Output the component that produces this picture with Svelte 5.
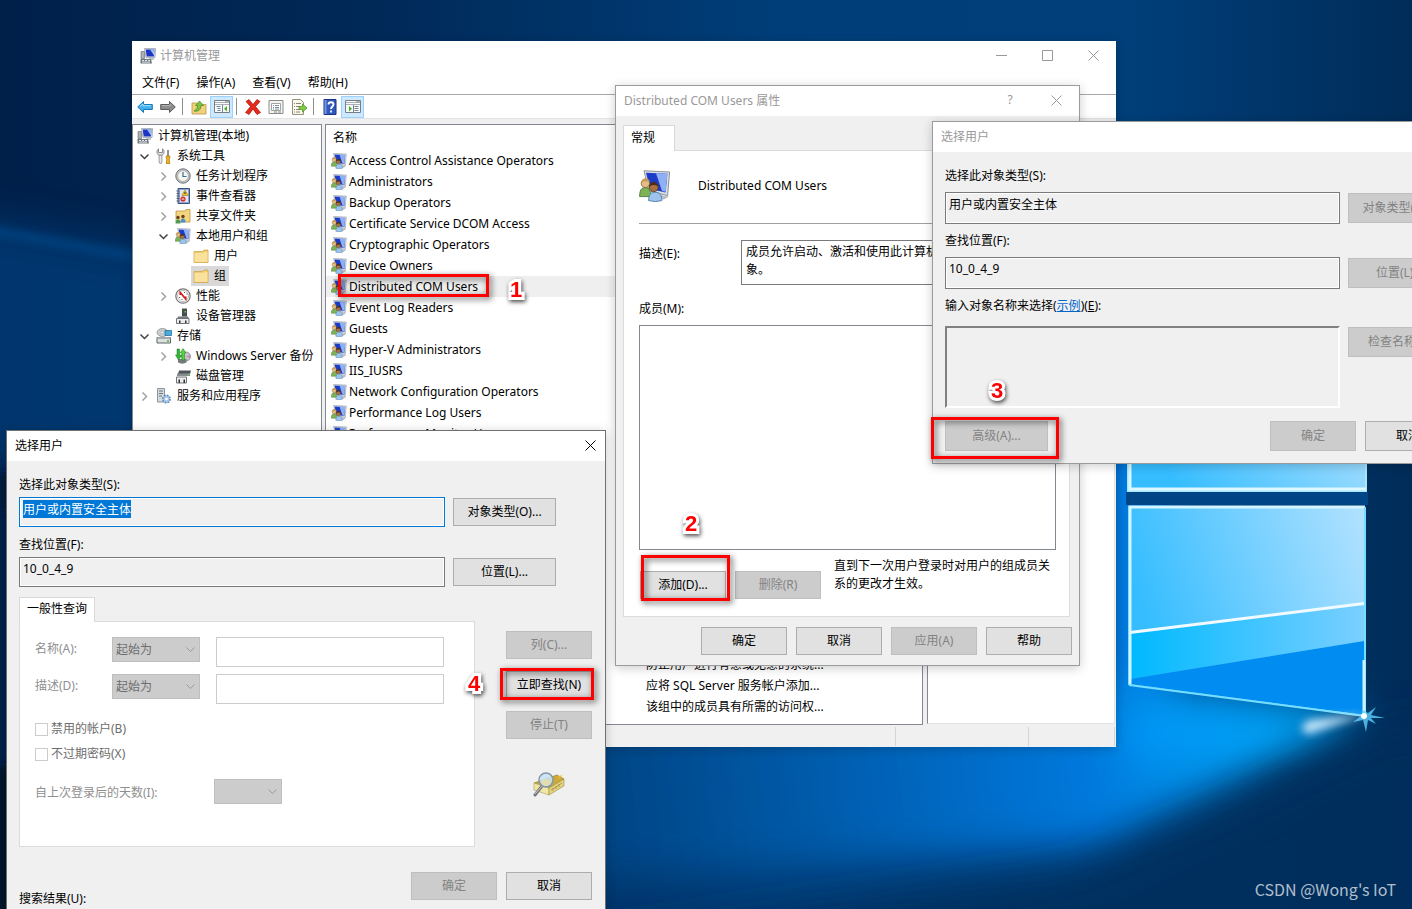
<script lang="ts">
	import { onMount } from 'svelte';

	type TreeNode = { level: number; icon: string; label: string; state?: 'open' | 'closed'; selected?: boolean };
	type Group = { name: string; description?: string; selected?: boolean };

	const menus = ['文件(F)', '操作(A)', '查看(V)', '帮助(H)'];

	const toolbar = [
		{ icon: 'back', label: '后退' },
		{ icon: 'forward', label: '前进' },
		null,
		{ icon: 'up', label: '上移' },
		{ icon: 'treePane', label: '显示控制台树', on: true },
		null,
		{ icon: 'remove', label: '删除' },
		{ icon: 'sheet', label: '属性' },
		{ icon: 'exportList', label: '导出列表' },
		null,
		{ icon: 'help', label: '帮助' },
		{ icon: 'actionPane', label: '显示操作窗格', on: true }
	];

	const tree: TreeNode[] = [
		{ level: 0, icon: 'computer', label: '计算机管理(本地)' },
		{ level: 1, icon: 'tools', label: '系统工具', state: 'open' },
		{ level: 2, icon: 'clock', label: '任务计划程序', state: 'closed' },
		{ level: 2, icon: 'eventLog', label: '事件查看器', state: 'closed' },
		{ level: 2, icon: 'share', label: '共享文件夹', state: 'closed' },
		{ level: 2, icon: 'users', label: '本地用户和组', state: 'open' },
		{ level: 3, icon: 'folder', label: '用户' },
		{ level: 3, icon: 'folder', label: '组', selected: true },
		{ level: 2, icon: 'gauge', label: '性能', state: 'closed' },
		{ level: 2, icon: 'device', label: '设备管理器' },
		{ level: 1, icon: 'storage', label: '存储', state: 'open' },
		{ level: 2, icon: 'backup', label: 'Windows Server 备份', state: 'closed' },
		{ level: 2, icon: 'disk', label: '磁盘管理' },
		{ level: 1, icon: 'services', label: '服务和应用程序', state: 'closed' }
	];

	const blank = (n: number): Group[] => Array.from({ length: n }, () => ({ name: '' }));

	const groups: Group[] = [
		{ name: 'Access Control Assistance Operators' },
		{ name: 'Administrators' },
		{ name: 'Backup Operators' },
		{ name: 'Certificate Service DCOM Access' },
		{ name: 'Cryptographic Operators' },
		{ name: 'Device Owners' },
		{ name: 'Distributed COM Users', selected: true },
		{ name: 'Event Log Readers' },
		{ name: 'Guests' },
		{ name: 'Hyper-V Administrators' },
		{ name: 'IIS_IUSRS' },
		{ name: 'Network Configuration Operators' },
		{ name: 'Performance Log Users' },
		{ name: 'Performance Monitor Users' },
		...blank(10),
		{ name: '', description: '防止用户进行有意或无意的系统...' },
		{ name: '', description: '应将 SQL Server 服务帐户添加...' },
		{ name: '', description: '该组中的成员具有所需的访问权...' }
	];

	let objectType = $state('用户或内置安全主体');
	let location = $state('10_0_4_9');
	let typeField: HTMLInputElement | null = $state(null);

	onMount(() => {
		typeField?.focus();
		typeField?.select();
	});
</script>

{#snippet people()}
	<path d="M2.500.400 15.300 1l-1 11.800L5 10.500z" fill="#d9dde2" stroke="#8b929b" stroke-width=".5" />
	<path d="M3.500 1.400 14.200 1.900l-.900 9.300L5.500 9.500z" fill="#1c3cc8" />
	<path d="M8.500 1.600l5.700.300-.900 9-1.800-.400z" fill="#8fb0f5" />
	<path d="M10.500 12.500l4.500.800-2.500 1.400-2-.200z" fill="#b9bec4" />
	<path d="M.300 13.300c0-3 .800-4.500 2.800-4.500s2.800 1.500 2.800 4.500z" fill="#7db356" stroke="#3f6f2c" stroke-width=".4" />
	<circle cx="3.200" cy="6.700" r="2.100" fill="#e3bd84" stroke="#80602f" stroke-width=".4" />
	<path d="M1.200 6.200c.200-2.800 4-2.600 4.100-.200-1.400-.500-2.700-.500-4.100.200z" fill="#c79a55" />
	<path d="M4.800 15.300c0-2.800 1-4.200 3.300-4.200s3.300 1.400 3.300 4.200q-3.300 1-6.600 0z" fill="#9cc4ec" stroke="#41719f" stroke-width=".4" />
	<circle cx="7.400" cy="8.600" r="2.200" fill="#a9713f" stroke="#533318" stroke-width=".4" />
	<path d="M5.200 8.200c0-3 4.400-3 4.400 0-1.500-.900-2.900-.900-4.400 0z" fill="#4e2e18" />
{/snippet}

{#snippet icon(name: string)}
	<svg class="icon" viewBox="0 0 16 16" aria-hidden="true">
		{#if name === 'computer'}
			<path d="M1 3.500h3.500v7H1z" fill="#aab0b6" stroke="#5f666d" stroke-width=".6" />
			<path d="M4.500.600h11l-.500 9H6z" fill="#e8eaed" stroke="#8b929b" stroke-width=".7" />
			<path d="M5.700 1.600h8.700l-.400 7H6.700z" fill="#1c36c4" />
			<path d="M10 1.600h4.400l-.400 6z" fill="#9cb9f8" />
			<path d="M9 10h5v2H9z" fill="#c2c6ca" />
			<path d="M.500 11h10.500l1 4.500H.500z" fill="#6e7881" />
			<path d="M2 12.500h2m1 0h2m1 0h2m-8 1.600h8" stroke="#e5e8ea" />
		{:else if name === 'back'}
			<path d="M.700 8 6.500 2.500v3H15.300v5H6.500v3z" fill="#41b1ee" stroke="#1878b8" />
			<path d="M3 7.600 6 5v1.700h8" fill="none" stroke="#a4defa" />
		{:else if name === 'forward'}
			<path d="M15.300 8 9.500 2.500v3H.700v5h8.800v3z" fill="#8c8c8c" stroke="#5c5c5c" />
			<path d="M1.700 6.700h8.600V5" fill="none" stroke="#b9b9b9" />
		{:else if name === 'up'}
			<path d="M1 4h5l1 1.500h8V15H1z" fill="#f1d27c" stroke="#bb9647" stroke-width=".8" />
			<path d="M3 12c2.500-1 3.500-3 3.500-5.500H4.500L8.500 2l4 4.500h-2.500c0 4-2.500 6.500-7 5.500z" fill="#7ec242" stroke="#43821b" stroke-width=".7" />
		{:else if name === 'treePane' || name === 'actionPane'}
			<path d="M.500 1.500h15v12H.500z" fill="#f9f9f9" stroke="#777f86" />
			<path d="M1 3.500h14M1 5.500h14" stroke="#aab0b5" />
			<path d="M11.500 2.600h1m1 0h1" stroke="#555" />
			{#if name === 'treePane'}
				<path d="M2.500 7.500h4m-3 2h3m-3 2h3M8.500 6v7" stroke="#748796" />
				<path d="M13 7v5.500L10 9.700z" fill="#4bab28" />
			{:else}
				<path d="M9.500 7.500h4m-4 2h4m-4 2h4M8.500 6v7" stroke="#748796" />
				<path d="M4 7v5.500l3-2.800z" fill="#4bab28" />
			{/if}
		{:else if name === 'remove'}
			<path d="M1 2.500 4 .500l4 5 4-5 3 2-4.500 5 5 6-3.500 2-4-5.500-4 5.500-3.500-2 5-6z" fill="#e62a1c" stroke="#a31409" stroke-width=".7" />
		{:else if name === 'sheet'}
			<path d="M1 1.500h14v13H1z" fill="#f3f3f1" stroke="#8b8b87" />
			<path d="M3.500 4.500h9v7h-9z" fill="#fff" stroke="#a4a4a0" />
			<path d="M5 6.500h1m1 0h4m-6 2h1m1 0h4m-6 1.600h1m1 0h4" stroke="#6d8594" stroke-width=".9" />
			<path d="M6 13h3m1 0h3" stroke="#8b8b87" />
		{:else if name === 'exportList'}
			<path d="M1.500.500h8l3 3v12h-11z" fill="#fbf8e8" stroke="#93907f" />
			<path d="M3 4.500h1m1 0h5m-7 3h1m1 0h4m-6 3h1m1 0h4m-6 2.500h1m1 0h4" stroke="#777" stroke-width=".9" />
			<path d="M8 7.500h3.500V5L16 9l-4.500 4v-2.500H8z" fill="#82cb47" stroke="#478d20" stroke-width=".7" />
		{:else if name === 'help'}
			<path d="M2 .500h12v15H2z" fill="#3158be" stroke="#1b3280" />
			<path d="M2.500 1h2v14h-2z" fill="#7895df" />
			<path d="M6.500 5.500c0-3 5-3 5 0 0 2-2.500 2-2.500 4.500M9 11.500v2" fill="none" stroke="#fff" stroke-width="1.800" />
		{:else if name === 'tools'}
			<path d="M4.500 7v7" stroke="#777c80" stroke-width="3.600" stroke-linecap="round" />
			<path d="M4.500 7v7" stroke="#e6e8ea" stroke-width="2.200" stroke-linecap="round" />
			<path d="M2.500.800C.200 2.500.500 6 3 7.200h3C8.500 6 8.800 2.500 6.500.800V4.500h-4z" fill="#e1e3e5" stroke="#6d7378" stroke-width=".8" />
			<path d="M12 2v6.500" stroke="#777" stroke-width="1.600" />
			<path d="M10.200 8h3.600v2l-.600 1 .600 4.500h-3.600l.600-4.500-.600-1z" fill="#f3b51e" stroke="#a76f07" stroke-width=".7" />
		{:else if name === 'clock'}
			<circle cx="8" cy="8" r="7.200" fill="#c3c7cb" stroke="#6d7278" />
			<circle cx="8" cy="8" r="5.400" fill="#f8f6ea" stroke="#94989c" stroke-width=".6" />
			<path d="M8 4v4.500h3.500" fill="none" stroke="#2a71ad" stroke-width="1.200" />
		{:else if name === 'eventLog'}
			<path d="M3 .500h11.500v15H3z" fill="#8ba6d6" stroke="#3c5079" />
			<path d="M5 2h8v12H5z" fill="#dfe7f5" />
			<path d="M1.500 3h3m-3 2.500h3m-3 2.500h3m-3 2.500h3m-3 2.500h3" stroke="#59606b" />
			<path d="M10 2l3.300 5.500H6.700z" fill="#f4c226" stroke="#906a08" stroke-width=".5" />
			<path d="M10 4v2" stroke="#222" />
			<circle cx="8" cy="11" r="2.600" fill="#d32a28" />
			<path d="M6.600 11h2.800" stroke="#fff" />
		{:else if name === 'share'}
			<path d="M1 3h9l1-1.500h4V14H1z" fill="#f3d57f" stroke="#bd963d" stroke-width=".8" />
			<path d="M.500 15.500c0-2.600.900-4 2.500-4s2.500 1.400 2.500 4z" fill="#4c9b54" />
			<circle cx="3" cy="9.500" r="1.700" fill="#68401f" />
			<path d="M5.500 14.500c0-2.600.900-4 2.500-4s2.500 1.400 2.500 4z" fill="#4e8fcb" />
			<circle cx="8" cy="8.500" r="1.700" fill="#68401f" />
		{:else if name === 'users'}
			{@render people()}
		{:else if name === 'folder'}
			<path d="M1 3.500h8.500L11 2h4v12.500H1z" fill="#f0cd72" stroke="#cfa648" stroke-width=".8" />
			<path d="M1.500 5h9l1-1h3v10h-13z" fill="#fae29c" />
		{:else if name === 'gauge'}
			<circle cx="8" cy="8" r="7.200" fill="#fff" stroke="#777" stroke-width="1.200" />
			<circle cx="8" cy="8" r="5.500" fill="none" stroke="#bbb" />
			<path d="M5.300 7V4.500l5.400 6.500V8.500" fill="none" stroke="#d41713" stroke-width="1.700" />
			<path d="M9 4.500h1m1.500 1.500h1M4 9.500h1m1.500 2h1" stroke="#555" />
		{:else if name === 'device'}
			<path d="M7 .500h5v8H7z" fill="#484d50" />
			<path d="M9.500 3H11v1.500H9.500z" fill="#50e52c" />
			<path d="M3 8.500h10l1 2.500H2z" fill="#737a7e" />
			<path d="M1.500 10.500h12.500v5H1.500z" fill="#ececec" stroke="#70757a" />
			<path d="M4 12.500h1.500V15H4zm6 0h1.500V15H10z" fill="#333" />
		{:else if name === 'storage'}
			<ellipse cx="6.500" cy="4.500" rx="5.500" ry="4" fill="#c9ced1" stroke="#7c8185" stroke-width=".7" />
			<ellipse cx="6" cy="4.500" rx="1.700" ry="1.200" fill="#fff" stroke="#7c8185" stroke-width=".5" />
			<path d="M9 2.500h6.500v5H9z" fill="#49aade" stroke="#176593" stroke-width=".7" />
			<path d="M1 9.500h13.500v5.500H1z" fill="#dcdfe0" stroke="#5f6467" />
			<path d="M1.500 9h13v2h-13z" fill="#a4a9ab" />
			<path d="M11 12.300h2v1.500h-2z" fill="#45bd27" />
		{:else if name === 'backup'}
			<circle cx="11" cy="8.500" r="4.500" fill="#c6c6ca" stroke="#77787c" stroke-width=".7" />
			<path d="M11 8.500 15 7l.300 3z" fill="#c886b2" />
			<path d="M3 11h8.500v3.500c-2.500 1.500-6 1.500-8.500 0z" fill="#767b7e" />
			<path d="M2 1h2.500v6H7l-3.500 5L.500 7H2z" fill="#2fb536" stroke="#1b7c20" stroke-width=".5" />
			<path d="M8 .500l3 4.500H9.500v7H7V5H5z" fill="#5bd33f" stroke="#1b7c20" stroke-width=".5" />
		{:else if name === 'disk'}
			<path d="M4 2.500h12l-1 3.500H3z" fill="#4e5457" />
			<path d="M2 5.500h13V8H2z" fill="#868c8f" />
			<path d="M12.500 6h2v1h-2z" fill="#57df32" />
			<path d="M1.500 9h10v6h-10z" fill="#ececec" stroke="#70757a" />
			<path d="M3.500 11.500H5V15H3.500zm5 0H10V15H8.500z" fill="#333" />
		{:else if name === 'services'}
			<path d="M1.500.500h7V14h-7z" fill="#d5dade" stroke="#8b949a" />
			<path d="M3 3h4M3 5.500h4M3 8h3" stroke="#6a747b" />
			<circle cx="10.500" cy="11" r="3.600" fill="#91b7df" stroke="#5d8cbd" stroke-width="1.800" stroke-dasharray="1.700 1.100" />
			<circle cx="10.500" cy="11" r="2.900" fill="#a5c6e8" />
			<circle cx="10.500" cy="11" r="1.300" fill="#fff" />
		{/if}
	</svg>
{/snippet}

{#snippet closeGlyph()}
	<svg class="glyph" viewBox="0 0 11 11" aria-hidden="true"><path d="M.500.500l10 10m0-10l-10 10" /></svg>
{/snippet}

{#snippet compare(id: string, width = '')}
	<span class="combo {width}">
		<select {id} disabled>
			<option>{width ? '' : '起始为'}</option>
		</select>
		<svg viewBox="0 0 9 5" aria-hidden="true"><path d="M.500.500l4 4 4-4" /></svg>
	</span>
{/snippet}

<div class="desktop">
	<svg class="wallpaper" viewBox="0 0 1412 909" preserveAspectRatio="none" aria-hidden="true">
		<defs>
			<linearGradient id="sky" x1="0" y1="0" x2="1" y2="0">
				<stop offset="0" stop-color="#00204a" />
				<stop offset=".25" stop-color="#002856" />
				<stop offset=".55" stop-color="#003e79" />
				<stop offset=".8" stop-color="#003f7a" />
				<stop offset="1" stop-color="#002c58" />
			</linearGradient>
			<linearGradient id="pane" x1="0" y1=".3" x2="1" y2="0">
				<stop offset="0" stop-color="#35bdff" />
				<stop offset="1" stop-color="#b3e2ff" />
			</linearGradient>
			<linearGradient id="band" x1="0" y1="0" x2="1" y2="0">
				<stop offset="0" stop-color="#00b9ff" />
				<stop offset="1" stop-color="#7acfff" />
			</linearGradient>
			<linearGradient id="beam" gradientUnits="userSpaceOnUse" x1="1365" y1="716" x2="560" y2="800">
				<stop offset="0" stop-color="#00b7ff" />
				<stop offset=".35" stop-color="#0078dc" />
				<stop offset="1" stop-color="#00407c" />
			</linearGradient>
			<filter id="soft" x="-30%" y="-30%" width="160%" height="160%"><feGaussianBlur stdDeviation="20" /></filter>
			<filter id="slight" x="-30%" y="-30%" width="160%" height="160%"><feGaussianBlur stdDeviation="4" /></filter>
		</defs>
		<rect width="1412" height="909" fill="url(#sky)" />
		<path d="M-40 215l260 50v220L-40 460z" fill="#00407d" opacity=".7" filter="url(#soft)" />
		<path d="M-20 224l180 32v9L-20 233z" fill="#00549b" opacity=".5" filter="url(#slight)" />
		<path d="M-20 474h50v36h-50z" fill="#001a3c" filter="url(#slight)" />
		<path d="M-20 766h60v160h-60z" fill="#00152c" filter="url(#slight)" />
		<path d="M1100 430h70v290h-70z" fill="#0080e8" filter="url(#soft)" />
		<path d="M1365 716 1110 686 560 690v190l540-32z" fill="url(#beam)" filter="url(#soft)" />
		<path d="M1365 716 1127 686v80z" fill="#00a2ff" opacity=".6" filter="url(#soft)" />
		<path d="M1390 727 1230 806 1070 872 600 940v60h860V720z" fill="#002e5c" opacity=".9" filter="url(#soft)" />
		<path d="M1128 370h238v121h-238z" fill="url(#pane)" stroke="#a7e8ff" stroke-width="2" />
		<path d="M1130 400v89h236" fill="none" stroke="#dcf7ff" stroke-width="3" />
		<path d="M1126 492h242v13h-242z" fill="#004687" />
		<path d="M1128 506h237v210l-237-31z" fill="url(#pane)" />
		<path d="M1130 633l234-30v38l-234 38z" fill="url(#band)" />
		<path d="M1130 679l234-38v74l-234-31z" fill="#008cf0" />
		<path d="M1130 632.500l234-29" stroke="#f1fbff" stroke-width="3" />
		<path d="M1130 685V507h235" fill="none" stroke="#d3f5ff" stroke-width="3" />
		<path d="M1365 507v209l-236-31" fill="none" stroke="#75deff" stroke-width="2" />
		<path d="M1364 660v56" stroke="#c9f4ff" stroke-width="3" />
		<path d="M1367 714l-58 6q-14 10 0 14z" fill="#d6efff" opacity=".9" filter="url(#slight)" />
		<path d="M1363 710l5 3 8-6-5 8 14 3-14 0 5 6-8-4-2 12-3-12-10 2 8-6z" fill="#5ccfff" opacity=".8" />
		<circle cx="1364" cy="716" r="3" fill="#fff" />
	</svg>

	<section class="window console" aria-label="计算机管理">
		<header class="titlebar">
			<h1>{@render icon('computer')}计算机管理</h1>
			<button class="caption" aria-label="最小化"><svg class="glyph" viewBox="0 0 11 11"><path d="M0 5.500h11" /></svg></button>
			<button class="caption" aria-label="最大化"><svg class="glyph" viewBox="0 0 11 11"><path d="M.500.500h10v10H.500z" /></svg></button>
			<button class="caption" aria-label="关闭">{@render closeGlyph()}</button>
		</header>
		<nav class="menubar">
			{#each menus as m (m)}
				<button>{m}</button>
			{/each}
		</nav>
		<div class="toolbar" role="toolbar" aria-label="工具栏">
			{#each toolbar as t}
				{#if t}
					<button class:on={t.on} aria-label={t.label}>{@render icon(t.icon)}</button>
				{:else}
					<span class="divider"></span>
				{/if}
			{/each}
		</div>

		<div class="panes">
			<ul class="tree">
				{#each tree as node (node.label)}
					<li class="level{node.level}">
						{#if node.level > 0}
							<span class="twisty {node.state ?? ''}">
								{#if node.state === 'open'}
									<svg viewBox="0 0 9 9"><path d="M.500 2.500l4 4 4-4" /></svg>
								{:else if node.state === 'closed'}
									<svg viewBox="0 0 9 9"><path d="M2.500.500l4 4-4 4" /></svg>
								{/if}
							</span>
						{/if}
						<span class="node" class:selected={node.selected}>{@render icon(node.icon)}{node.label}</span>
					</li>
				{/each}
			</ul>

			<div class="list">
				<table>
					<thead>
						<tr><th>名称</th><th aria-label="描述"></th></tr>
					</thead>
					<tbody>
						{#each groups as g}
							<tr class:selected={g.selected}>
								<td>{#if g.name}<span class="entry">{@render icon('users')}{g.name}</span>{/if}</td>
								<td>{g.description ?? ''}</td>
							</tr>
						{/each}
					</tbody>
				</table>
			</div>
			<aside class="actions"></aside>
		</div>
		<footer class="statusbar"><span></span><span></span><span></span></footer>
	</section>

	<section class="window properties" aria-label="Distributed COM Users 属性">
		<header class="titlebar">
			<h2>Distributed COM Users 属性</h2>
			<button class="caption" aria-label="帮助">?</button>
			<button class="caption" aria-label="关闭">{@render closeGlyph()}</button>
		</header>
		<div class="body">
			<button class="tab">常规</button>
			<div class="sheet">
				<div class="identity">
					<svg class="portrait" viewBox="0 0 16 16" aria-hidden="true">{@render people()}</svg>
					<span>Distributed COM Users</span>
				</div>
				<div class="describe">
					<label for="description">描述(E):</label>
					<textarea id="description" readonly>成员允许启动、激活和使用此计算机上的分布式 COM 对象。</textarea>
				</div>
				<label class="members-label" for="members">成员(M):</label>
				<select id="members" class="members" size="4"></select>
				<div class="member-actions">
					<button class="push">添加(D)...</button>
					<button class="push" disabled>删除(R)</button>
					<p>直到下一次用户登录时对用户的组成员关系的更改才生效。</p>
				</div>
			</div>
			<div class="buttons">
				<button class="push">确定</button>
				<button class="push">取消</button>
				<button class="push" disabled>应用(A)</button>
				<button class="push">帮助</button>
			</div>
		</div>
	</section>

	<section class="window picker" aria-label="选择用户">
		<header class="titlebar">
			<h2>选择用户</h2>
			<button class="caption small" aria-label="关闭">{@render closeGlyph()}</button>
		</header>
		<div class="body">
			<label for="picker-type">选择此对象类型(S):</label>
			<div class="row">
				<input id="picker-type" class="field" readonly value="用户或内置安全主体" />
				<button class="push" disabled>对象类型(O)...</button>
			</div>
			<label for="picker-place">查找位置(F):</label>
			<div class="row">
				<input id="picker-place" class="field" readonly value="10_0_4_9" />
				<button class="push" disabled>位置(L)...</button>
			</div>
			<label for="picker-names">输入对象名称来选择(<a href="#example">示例</a>)(<u>E</u>):</label>
			<div class="row">
				<textarea id="picker-names" class="names" readonly></textarea>
				<button class="push" disabled>检查名称(C)</button>
			</div>
			<div class="buttons">
				<button class="push wide" disabled>高级(A)...</button>
				<button class="push" disabled>确定</button>
				<button class="push">取消</button>
			</div>
		</div>
	</section>

	<section class="window search" aria-label="选择用户">
		<header class="titlebar">
			<h2>选择用户</h2>
			<button class="caption small" aria-label="关闭">{@render closeGlyph()}</button>
		</header>
		<div class="body">
			<label for="search-type">选择此对象类型(S):</label>
			<div class="row">
				<input id="search-type" class="field" bind:this={typeField} bind:value={objectType} />
				<button class="push">对象类型(O)...</button>
			</div>
			<label for="search-place">查找位置(F):</label>
			<div class="row">
				<input id="search-place" class="field" bind:value={location} />
				<button class="push">位置(L)...</button>
			</div>
			<div class="query">
				<div class="query-main">
					<button class="tab">一般性查询</button>
					<div class="sheet">
						<div class="criteria">
							<label for="name-text">名称(A):</label>
							{@render compare('name-op')}
							<input id="name-text" aria-label="名称" disabled />
						</div>
						<div class="criteria">
							<label for="desc-text">描述(D):</label>
							{@render compare('desc-op')}
							<input id="desc-text" aria-label="描述" disabled />
						</div>
						<div class="checks">
							<label><input type="checkbox" disabled />禁用的帐户(B)</label>
							<label><input type="checkbox" disabled />不过期密码(X)</label>
						</div>
						<div class="days">
							<label for="days">自上次登录后的天数(I):</label>
							{@render compare('days', 'short')}
						</div>
					</div>
				</div>
				<div class="query-side">
					<button class="push" disabled>列(C)...</button>
					<button class="push">立即查找(N)</button>
					<button class="push" disabled>停止(T)</button>
					<svg class="finder" viewBox="0 0 32 26" aria-hidden="true">
						<path d="M1 11 24 3l7 4-13 9z" fill="#c9a93a" stroke="#8c7524" stroke-width=".6" />
						<path d="M1 11l15 5v7L1 18z" fill="#f1e7a5" stroke="#a99a50" stroke-width=".6" />
						<path d="M16 16l15-9v7l-15 9z" fill="#e2d280" stroke="#a08f42" stroke-width=".6" />
						<path d="M18 18l11-7m-9 5v3m3-5v3m3-5v3" stroke="#958238" stroke-width=".6" />
						<path d="M24 5l5-2-2 4z" fill="#eeb52c" />
						<path d="M9 14 2 23" stroke="#77787d" stroke-width="3" stroke-linecap="round" />
						<path d="M9 14 2 22" stroke="#c9cacf" />
						<circle cx="13" cy="8" r="7" fill="#c7e4f7" fill-opacity=".85" stroke="#8794a5" stroke-width="1.500" />
						<path d="M8 9q5-3 10 0-2 5-5 5t-5-5z" fill="#eadf9f" opacity=".8" />
					</svg>
				</div>
			</div>
			<div class="buttons">
				<button class="push" disabled>确定</button>
				<button class="push">取消</button>
			</div>
			<span class="results">搜索结果(U):</span>
		</div>
	</section>

	<div class="mark mark-group"></div>
	<div class="mark mark-add"></div>
	<div class="mark mark-advanced"></div>
	<div class="mark mark-find"></div>
	<span class="step step-1">1</span>
	<span class="step step-2">2</span>
	<span class="step step-3">3</span>
	<span class="step step-4">4</span>
	<span class="watermark">CSDN @Wong's IoT</span>
</div>

<style>
	:global(body) { margin: 0; }

	.desktop {
		--face: #f0f0f0;
		--edge: #828790;
		--field: #7a7a7a;
		position: relative;
		height: 100vh;
		overflow: hidden;
		background: #002f60;
		font: 12px/18px "Noto Sans", "Noto Sans CJK SC", sans-serif;
		color: #000;
	}
	.desktop * { box-sizing: border-box; }
	.wallpaper { position: absolute; inset: 0; width: 100%; height: 100%; }
	button, input, select, textarea { font: inherit; color: inherit; border-radius: 0; margin: 0; }
	h1, h2, p, ul { margin: 0; padding: 0; font: inherit; }
	label { display: block; }
	.icon { width: 16px; height: 16px; flex-shrink: 0; }

	/* windows */
	.window {
		position: absolute;
		display: flex;
		flex-direction: column;
		background: var(--face);
		border: 1px solid #9b9b9b;
		box-shadow: 0 2px 10px rgba(0, 0, 0, 0.2);
	}
	.titlebar { display: flex; align-items: flex-start; height: 30px; background: #fff; color: #999; flex-shrink: 0; }
	.titlebar h1, .titlebar h2 { flex: 1; display: flex; align-items: center; gap: 4px; height: 30px; padding-left: 8px; }
	.caption {
		width: 46px;
		height: 28px;
		padding: 0;
		border: none;
		background: none;
		display: grid;
		place-items: center;
	}
	.caption.small { width: 30px; }
	.glyph { width: 11px; height: 11px; fill: none; stroke: currentColor; }
	.body { display: flex; flex-direction: column; flex: 1; }

	.push {
		width: 86px;
		height: 28px;
		padding: 0;
		flex-shrink: 0;
		background: #e1e1e1;
		border: 1px solid #adadad;
	}
	.push:disabled { background: #ccc; border-color: #bfbfbf; color: #838383; }
	.tab {
		align-self: flex-start;
		position: relative;
		z-index: 1;
		height: 26px;
		margin-bottom: -1px;
		padding: 0 7px 2px;
		background: #fff;
		border: 1px solid #d9d9d9;
		border-bottom: none;
		text-align: left;
	}
	.sheet { background: #fff; border: 1px solid #dcdcdc; display: flex; flex-direction: column; }
	.buttons { display: flex; justify-content: flex-end; gap: 9px; }
	.row { display: flex; align-items: flex-start; gap: 8px; }
	.row .push, .push.wide { width: 103px; }
	.row .push { margin-top: 1px; }
	.field {
		flex: 1;
		min-width: 0;
		height: 30px;
		padding: 0 3px 7px;
		background: var(--face);
		border: 1px solid var(--field);
		box-shadow: inset 0 0 0 1px #fff;
		outline: none;
	}
	.field:focus { border-color: #0078d7; }
	.field::selection { background: #0078d7; color: #fff; }

	/* console */
	.console { left: 132px; top: 41px; width: 984px; height: 706px; border: none; }
	.menubar { display: flex; gap: 17px; padding: 0 10px; height: 23px; background: #fff; }
	.menubar button { padding: 0; border: none; background: none; }
	.toolbar {
		display: flex;
		align-items: center;
		height: 25px;
		padding-left: 1px;
		background: #fff;
		border-top: 1px solid #a8a8a8;
		border-bottom: 1px solid #e3e3e3;
	}
	.toolbar button {
		display: grid;
		place-items: center;
		width: 23px;
		height: 22px;
		padding: 0;
		border: 1px solid transparent;
		background: none;
	}
	.toolbar button.on { background: #cde8ff; border-color: #99d1ff; }
	.divider { width: 1px; height: 17px; margin: 0 4px 0 3px; background: #8d8d8d; }
	.panes { flex: 1; min-height: 0; display: flex; padding-top: 5px; }
	.tree {
		width: 190px;
		padding-top: 1px;
		background: #fff;
		border: 1px solid var(--edge);
		list-style: none;
		white-space: nowrap;
		overflow: hidden;
	}
	.tree li { display: flex; align-items: center; height: 20px; padding-left: 2px; }
	.tree .level1 { padding-left: 4px; }
	.tree .level2 { padding-left: 23px; }
	.tree .level3 { padding-left: 41px; }
	.twisty { display: grid; place-items: center; width: 15px; margin-right: 2px; }
	.twisty svg { width: 9px; height: 9px; fill: none; stroke: #a2a2a2; stroke-width: 1.5; }
	.twisty.open svg { stroke: #404040; }
	.node { display: flex; align-items: center; gap: 5px; height: 20px; padding: 0 3px 0 2px; }
	.node.selected { background: #d9d9d9; }
	.list { flex: 1; margin-left: 3px; padding-top: 1px; background: #fff; border: 1px solid var(--edge); overflow: hidden; }
	.list table { width: 100%; border-collapse: collapse; table-layout: fixed; white-space: nowrap; }
	.list th { width: 310px; height: 24px; padding: 0 7px; font-weight: normal; text-align: left; }
	.list th + th { width: auto; }
	.list td { height: 21px; padding: 0 5px; line-height: 20px; }
	.list td + td { padding-left: 10px; }
	.list .selected { background: #efefef; }
	.entry { display: flex; align-items: center; gap: 2px; }
	.actions { width: 188px; margin: 0 1px 1px 4px; background: #fff; border: 1px solid #e3e3e3; border-left-color: var(--edge); }
	.statusbar { display: flex; justify-content: flex-end; height: 22px; padding: 2px 1px 1px; }
	.statusbar span { border-right: 1px solid #d5d5d5; }
	.statusbar span + span { width: 133px; }
	.statusbar span + span + span { width: 86px; }

	/* group properties */
	.properties { left: 615px; top: 85px; width: 465px; height: 581px; }
	.properties .body { padding: 9px 9px 10px 7px; }
	.properties .tab { width: 52px; }
	.properties .sheet { flex: 1; padding: 15px 13px 0 15px; margin-bottom: 10px; }
	.properties .buttons { margin-right: -2px; }
	.identity { display: flex; align-items: center; gap: 27px; height: 58px; padding-bottom: 18px; border-bottom: 1px solid #a0a0a0; }
	.portrait { width: 32px; height: 32px; }
	.describe { display: flex; gap: 20px; margin-top: 16px; }
	.describe label { width: 82px; padding-top: 5px; }
	.describe textarea {
		flex: 1;
		height: 45px;
		padding: 2px 4px;
		border: 1px solid var(--field);
		resize: none;
		overflow: hidden;
	}
	.members-label { margin: 15px 0 7px; }
	.members { height: 225px; border: 1px solid var(--edge); background: #fff; }
	.member-actions { display: flex; gap: 9px; padding: 7px 0 0 1px; }
	.member-actions .push { margin-top: 14px; }
	.member-actions p { padding-left: 4px; }

	/* user picker behind */
	.picker { left: 932px; top: 121px; width: 532px; height: 343px; }
	.picker .body { padding: 15px 12px 12px; }
	.picker .row { margin: 7px 0 8px; }
	.picker .field { height: 32px; padding-bottom: 9px; }
	.picker .push { height: 30px; }
	.picker a { color: #0066cc; }
	.names {
		flex: 1;
		height: 82px;
		padding: 2px;
		background: var(--face);
		border: 2px solid;
		border-color: #808080 #fff #fff #808080;
		resize: none;
	}
	.picker .row:nth-of-type(3) { margin-top: 11px; }
	.picker .buttons { margin-top: auto; }
	.picker .buttons .wide { margin-right: auto; }

	/* user search in front */
	.search { left: 6px; top: 430px; width: 600px; height: 520px; border-color: #707070; }
	.search .titlebar { color: #000; }
	.search .body { padding: 15px 13px 0 12px; }
	.search .row { margin: 3px 36px 9px 0; }
	.query { display: flex; gap: 31px; margin-top: 1px; }
	.query-main { flex: 1; display: flex; flex-direction: column; }
	.query .tab { height: 25px; }
	.search .sheet { height: 226px; padding: 15px 30px 0 15px; color: #8f8f8f; }
	.criteria { display: grid; grid-template-columns: 77px 88px 1fr; height: 37px; }
	.criteria label { padding-top: 3px; }
	.criteria > input { height: 30px; margin-left: 16px; min-width: 0; background: #fff; border: 1px solid #ccc; }
	.combo { position: relative; display: block; width: 88px; height: 25px; }
	.combo.short { width: 68px; }
	.combo select {
		appearance: none;
		width: 100%;
		height: 25px;
		padding: 0 3px;
		background: #ccc;
		border: 1px solid #bfbfbf;
		color: #6d6d6d;
		opacity: 1;
	}
	.combo svg { position: absolute; right: 5px; top: 10px; width: 9px; height: 5px; fill: none; stroke: #9a9a9a; }
	.checks { display: grid; gap: 7px; margin-top: 9px; color: #6d6d6d; }
	.checks label { display: flex; align-items: center; gap: 3px; }
	.checks input { appearance: none; width: 13px; height: 13px; background: #fff; border: 1px solid #ccc; }
	.days { display: flex; gap: 55px; margin-top: 16px; }
	.days label { width: 124px; padding-top: 5px; }
	.query-side { display: flex; flex-direction: column; align-items: center; gap: 12px; padding-top: 34px; }
	.finder { width: 32px; height: 26px; margin-top: 21px; }
	.search .buttons { margin-top: 25px; }
	.results { margin-top: -10px; }

	/* annotations */
	.mark { position: absolute; border: 3px solid #f00; filter: drop-shadow(2px 2px 3px rgba(0, 0, 0, 0.7)); pointer-events: none; }
	.mark-group { left: 338px; top: 274px; width: 151px; height: 23px; }
	.mark-add { left: 641px; top: 555px; width: 89px; height: 46px; }
	.mark-advanced { left: 931px; top: 417px; width: 128px; height: 42px; }
	.mark-find { left: 500px; top: 668px; width: 94px; height: 32px; }
	.step {
		position: absolute;
		font: bold 22px/24px "Liberation Sans", sans-serif;
		color: #f00;
		-webkit-text-stroke: 6px #fff;
		paint-order: stroke fill;
		filter: drop-shadow(1px 2px 2px rgba(0, 0, 0, 0.7));
	}
	.step-1 { left: 510px; top: 278px; }
	.step-2 { left: 685px; top: 512px; }
	.step-3 { left: 991px; top: 379px; }
	.step-4 { left: 468px; top: 672px; }
	.watermark {
		position: absolute;
		right: 16px;
		bottom: 8px;
		font: 16px/24px "Noto Sans CJK SC", sans-serif;
		color: rgba(255, 255, 255, 0.7);
	}
</style>
